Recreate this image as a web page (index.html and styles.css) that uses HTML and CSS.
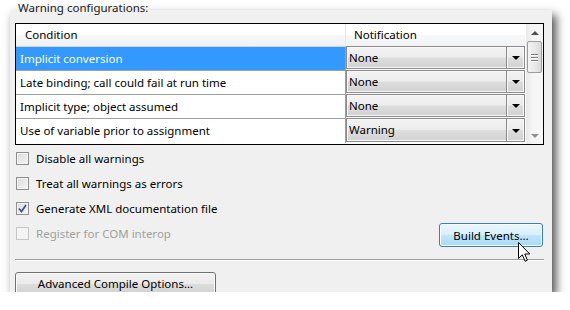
FILE: index.html
```html
<!DOCTYPE html>
<html lang="en">
<head>
    <meta charset="UTF-8">
    <title>Compile - Warning configurations</title>
    <link rel="stylesheet" href="styles.css">
</head>
<body>
    <div class="dialog">
        <div class="caption">Warning configurations:</div>

        <div class="grid-box">
            <div class="grid">
                <div class="grid-head">
                    <div class="col-cond">Condition</div>
                    <div class="col-notif">Notification</div>
                </div>
                <div class="grid-row selected">
                    <div class="col-cond">Implicit conversion</div>
                    <div class="col-notif"><div class="combo"><span class="combo-text">None</span><span class="combo-btn"><i class="arrow-down"></i></span></div></div>
                </div>
                <div class="grid-row">
                    <div class="col-cond">Late binding; call could fail at run time</div>
                    <div class="col-notif"><div class="combo"><span class="combo-text">None</span><span class="combo-btn"><i class="arrow-down"></i></span></div></div>
                </div>
                <div class="grid-row">
                    <div class="col-cond">Implicit type; object assumed</div>
                    <div class="col-notif"><div class="combo"><span class="combo-text">None</span><span class="combo-btn"><i class="arrow-down"></i></span></div></div>
                </div>
                <div class="grid-row last">
                    <div class="col-cond">Use of variable prior to assignment</div>
                    <div class="col-notif"><div class="combo"><span class="combo-text">Warning</span><span class="combo-btn"><i class="arrow-down"></i></span></div></div>
                </div>
            </div>
            <div class="scrollbar">
                <div class="sb-arrow"><i class="sb-up"></i></div>
                <div class="sb-thumb"><span></span><span></span><span></span></div>
                <div class="sb-track"></div>
                <div class="sb-arrow"><i class="sb-down"></i></div>
            </div>
        </div>

        <div class="checks">
            <label class="check"><span class="box"></span>Disable all warnings</label>
            <label class="check"><span class="box"></span>Treat all warnings as errors</label>
            <label class="check"><span class="box checked"><svg width="9" height="9" viewBox="0 0 9 9"><path d="M1 4.5 L3.5 7.5 L8 1" fill="none" stroke="#3d5289" stroke-width="1.7"/></svg></span>Generate XML documentation file</label>
            <div class="check-row">
                <label class="check disabled"><span class="box"></span>Register for COM interop</label>
                <button class="btn hot">Build Events...
                    <svg class="cursor" width="13" height="21" viewBox="0 0 13 21"><path d="M0.5 0.5 L0.5 16.5 L4.3 12.8 L7 19.2 L9.4 18.2 L6.8 12 L11.8 12 Z" fill="#fff" stroke="#000" stroke-width="1" stroke-linejoin="miter"/></svg>
                </button>
            </div>
        </div>

        <div class="separator"></div>

        <div class="bottom-clip">
            <button class="btn wide">Advanced Compile Options...</button>
        </div>
    </div>
</body>
</html>
```

FILE: styles.css
```css
* {
    margin: 0;
    padding: 0;
    box-sizing: border-box;
}

body {
    background: #fff;
    font-family: 'Noto Sans', 'Liberation Sans', sans-serif;
    font-size: 11.5px;
    color: #000;
}

.dialog {
    display: flow-root;
    margin: 10px 0 0 10px;
    width: 542px;
    height: 282px;
    padding-left: 5px;
    background: #f0f0f0;
    box-shadow: 4px 5px 9px rgba(0, 0, 0, 0.7);
}

.caption {
    margin-top: -10px;
    height: 13px;
    line-height: 15px;
    padding-left: 3px;
    color: #1a1a1a;
}

/* warning grid */
.grid-box {
    margin-top: 10px;
    width: 529px;
    height: 122px;
    border: 1px solid #000;
    background: #fff;
    display: flex;
}

.grid {
    width: 510px;
}

.grid-head {
    display: flex;
    height: 23px;
    background: linear-gradient(#fff 0%, #fff 50%, #f7f8fa 51%, #f1f2f4 100%);
    border-bottom: 1px solid #d5d5d5;
}

.grid-head .col-cond {
    padding-left: 9px;
    border-right: 1px solid #e3e5e8;
}

.grid-head .col-notif {
    padding-left: 8px;
}

.grid-head > div {
    line-height: 22px;
}

.col-cond {
    width: 330px;
    flex: none;
    border-right: 1px solid #a0a0a0;
    padding-left: 4px;
}

.col-notif {
    flex: 1;
}

.grid-row {
    display: flex;
    height: 24px;
    border-bottom: 1px solid #a0a0a0;
}

.grid-row.last {
    border-bottom: none;
}

.grid-row .col-cond {
    line-height: 23px;
}

.grid-row.selected .col-cond {
    background: #3399ff;
    color: #fff;
}

.combo {
    display: flex;
    height: 23px;
    margin-top: -1px;
    border: 1px solid #8a8a8a;
    box-shadow: inset 0 0 0 1px #f8f8f8;
    background: linear-gradient(#f3f3f3 0%, #ececec 48%, #dddddd 52%, #d2d2d2 100%);
}

.grid-row.last .combo {
    height: 24px;
}

.combo-text {
    flex: 1;
    padding-left: 2px;
    line-height: 22px;
}

.combo-btn {
    width: 18px;
    border-left: 1px solid #8a8a8a;
    box-shadow: inset 1px 0 0 #f8f8f8;
    display: flex;
    align-items: center;
    justify-content: center;
}

.arrow-down {
    width: 0;
    height: 0;
    border-left: 4px solid transparent;
    border-right: 4px solid transparent;
    border-top: 4px solid #000;
    margin-top: 1px;
}

/* scrollbar */
.scrollbar {
    width: 17px;
    margin-left: 1px;
    display: flex;
    flex-direction: column;
    background: linear-gradient(90deg, #e8e8e8, #f6f6f6 40%, #f6f6f6);
}

.sb-arrow {
    height: 17px;
    display: flex;
    align-items: center;
    justify-content: center;
}

.sb-up {
    width: 0;
    height: 0;
    border-left: 4px solid transparent;
    border-right: 4px solid transparent;
    border-bottom: 4px solid #505050;
}

.sb-down {
    width: 0;
    height: 0;
    border-left: 4px solid transparent;
    border-right: 4px solid transparent;
    border-top: 4px solid #909090;
}

.sb-thumb {
    height: 32px;
    margin: 0 1px;
    border: 1px solid #9c9c9c;
    border-radius: 2px;
    background: linear-gradient(90deg, #f3f3f3, #e9e9e9 50%, #d9d9d9);
    display: flex;
    flex-direction: column;
    align-items: center;
    justify-content: center;
    gap: 2px;
}

.sb-thumb span {
    width: 7px;
    height: 1px;
    background: #7a7a7a;
    box-shadow: 0 1px 0 #fff;
}

.sb-track {
    flex: 1;
}

/* checkboxes */
.checks {
    margin-top: 1px;
    width: 529px;
}

.check {
    display: flex;
    align-items: center;
    height: 25px;
    padding-left: 1px;
    color: #000;
}

.box {
    width: 13px;
    height: 13px;
    margin-right: 7px;
    border: 1px solid #8e8f8f;
    background: linear-gradient(135deg, #d9dadb, #f6f6f6);
    box-shadow: inset 0 0 0 1px #f4f4f4;
    display: flex;
    align-items: center;
    justify-content: center;
}

.check.disabled {
    color: #a0a0a0;
}

.check.disabled .box {
    border-color: #c6c6c6;
    background: #f4f4f4;
}

.check-row {
    display: flex;
    justify-content: space-between;
    align-items: flex-start;
}

/* buttons */
.btn {
    position: relative;
    font-family: inherit;
    font-size: 11.5px;
    color: #000;
    height: 24px;
    border: 1px solid #707070;
    border-radius: 3px;
    background: linear-gradient(#f2f2f2 0%, #ebebeb 48%, #dddddd 52%, #cfcfcf 100%);
    box-shadow: inset 0 0 0 1px #fbfbfb;
}

.btn.hot {
    width: 104px;
    margin-top: 2px;
    margin-right: 1px;
    border-color: #3c7fb1;
    background: linear-gradient(#eaf6fd 0%, #d9f0fc 48%, #bee6fd 52%, #a7d9f5 100%);
}

.cursor {
    position: absolute;
    left: 78px;
    top: 18px;
}

.separator {
    margin-top: 12px;
    width: 529px;
    height: 2px;
    border-top: 1px solid #a0a0a0;
    border-bottom: 1px solid #fff;
}

.bottom-clip {
    margin-top: 11px;
    height: 20px;
    overflow: hidden;
}

.btn.wide {
    display: block;
    width: 201px;
    height: 24px;
    line-height: 20px;
}
```
